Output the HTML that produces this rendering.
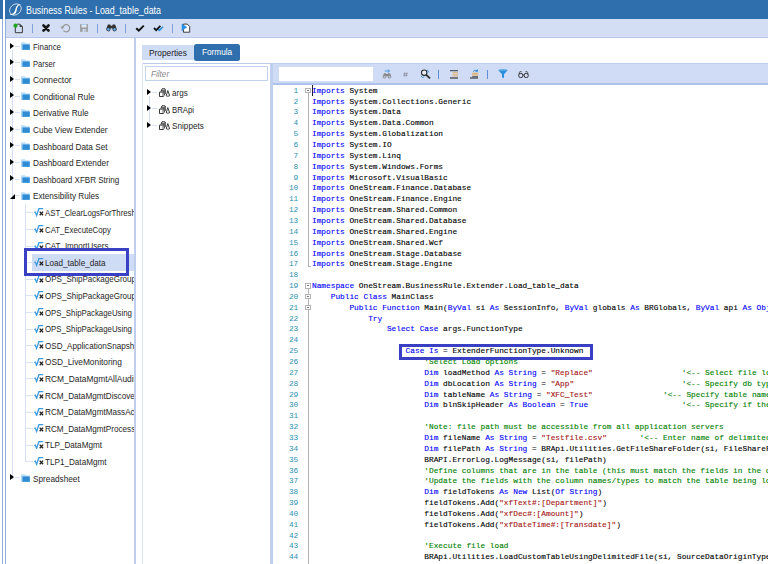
<!DOCTYPE html>
<html><head><meta charset="utf-8"><title>Business Rules - Load_table_data</title>
<style>
html,body{margin:0;padding:0;font-family:"Liberation Sans",sans-serif;}
body{width:768px;height:564px;overflow:hidden;background:#fff;position:relative;font-family:"Liberation Sans",sans-serif;}
#root{position:absolute;left:0;top:0;width:768px;height:564px;overflow:hidden;background:#fff;}
.abs{position:absolute;}
/* window chrome */
#lstrip{left:0;top:0;width:3px;height:19px;background:#2f6fad;}
#lline1{left:2px;top:19px;width:1px;height:545px;background:#8fb0d8;}
#lline2{left:5px;top:19px;width:1px;height:545px;background:#8fb0d8;}
#title{left:5px;top:0;width:763px;height:19px;background:#2f6fad;}
#title .t{position:absolute;left:21.4px;top:4.0px;font-size:10px;line-height:13px;color:#fff;white-space:nowrap;transform:scaleX(0.8862);transform-origin:0 50%;}
#tb{left:6px;top:19px;width:762px;height:19px;background:#d3def5;border-bottom:1.4px solid #b6c7ea;box-sizing:border-box;}
.sep{position:absolute;width:1px;background:#7fa2da;top:23.5px;height:9px;}
/* tree */
#treep{left:6px;top:38px;width:127px;height:526px;background:#fff;overflow:hidden;}
#treeclip{left:0;top:0;width:133.6px;height:564px;overflow:hidden;}
#split1{left:133.8px;top:37.5px;width:2.2px;height:527px;background:#bfcdee;}
.tt{position:absolute;font-size:8.7px;line-height:14px;color:#262626;white-space:nowrap;transform-origin:0 50%;}
.ti{position:absolute;line-height:0;}
.fo{width:9px;height:8.2px;}
.ru{width:10px;height:8.5px;}
.arr-c{position:absolute;left:9.8px;width:0;height:0;border-left:4.5px solid #000;border-top:3.6px solid transparent;border-bottom:3.6px solid transparent;}
.arr-o{position:absolute;left:10.4px;width:0;height:0;border-bottom:5px solid #000;border-left:5px solid transparent;}
.hl{position:absolute;height:1px;background:#dbe2f3;}
.vl{position:absolute;width:1px;background:#d5def2;}
.selbg{position:absolute;left:32px;width:102px;height:16.5px;background:#cfdcf5;}
.annot{position:absolute;border:3px solid #3a40c4;box-sizing:border-box;}
/* tabs */
#tabP{left:142px;top:45px;width:52px;height:15px;background:#cfdcf5;}
#tabF{left:194px;top:44px;width:45.5px;height:16.6px;background:#2f6fad;border-radius:2.5px;}
.tabt{position:absolute;font-size:8.7px;line-height:12px;white-space:nowrap;transform-origin:0 50%;}
#pborder-t{left:142px;top:63px;width:626px;height:1px;background:#bccbeb;}
#pborder-l{left:141.6px;top:63px;width:1.2px;height:501px;background:#dbe4f6;}
#filter{left:145px;top:66px;width:122.6px;height:15.4px;border:1px solid #c3d2ee;box-sizing:border-box;background:#fff;}
#filter span{position:absolute;left:4.6px;top:2px;font-size:8.4px;line-height:10px;font-style:italic;color:#8a8a8a;transform:scaleX(0.9718);transform-origin:0 50%;}
#split2{left:270px;top:63px;width:3px;height:501px;background:#c1cfee;}
.gi{position:absolute;line-height:0;}
/* code */
#ctb{left:273px;top:63px;width:495px;height:21.5px;background:#d0dcf5;border-bottom:2px solid #adc2ea;border-top:1px solid #bfcdee;box-sizing:border-box;}
#search{left:278.5px;top:67px;width:94.6px;height:14px;background:#fff;}
#codewrap{left:273px;top:84.5px;width:495px;height:480px;overflow:hidden;background:#fff;}
#code{position:absolute;left:-273px;top:-84.5px;width:1200px;height:564px;font-family:"Liberation Mono",monospace;font-size:7.800px;}
.ln{position:absolute;left:270px;width:28.3px;text-align:right;height:11px;line-height:11px;color:#2b91af;white-space:pre;}
.cl{position:absolute;height:11px;line-height:11px;color:#000;white-space:pre;-webkit-text-stroke:0.12px;}
.k{color:#0000ff}.s{color:#a31515}.c{color:#008000}
.fb{position:absolute;left:305.2px;border:1px solid #b3b3b3;box-sizing:border-box;background:#fff;width:5.6px;height:5.6px;}
.fb i{position:absolute;left:0.6px;top:1.3px;width:2.6px;height:1px;background:#777;}
.foldv{position:absolute;left:308px;width:1px;background:#b3b3b3;}
</style></head>
<body><div id="root">
<!-- chrome -->
<div class="abs" id="lstrip"></div>
<div class="abs" id="lline1"></div>
<div class="abs" id="lline2"></div>
<div class="abs" id="title">
 <svg class="abs" style="left:4px;top:3px" width="13" height="13" viewBox="0 0 13 13"><ellipse cx="6.4" cy="6.5" rx="6.3" ry="5.1" fill="none" stroke="#d5e1f0" stroke-width="0.9" transform="rotate(-40 6.4 6.5)"/><path d="M12.4 1.0 C8.8 0.8 7.6 2.8 6.7 5.2 C6 7.2 5.6 9.6 4 10.4 C2.8 11 1.6 11.3 0.2 11.7 C3 12.3 5.6 11.9 6.8 10.1 C7.8 8.6 7.6 6.5 8.4 4.6 C9.2 2.7 10.3 1.7 12.4 1.0 Z" fill="#fff"/></svg>
 <div class="t">Business Rules - Load_table_data</div>
</div>
<div class="abs" id="tb"></div>
<!-- toolbar icons -->
<div id="tbicons">
 <div class="sep" style="left:32px"></div>
 <div class="sep" style="left:97.3px"></div>
 <div class="sep" style="left:125px"></div>
 <div class="sep" style="left:171.5px"></div>
 <!-- new doc -->
 <svg class="abs" style="left:13px;top:22.5px" width="11" height="11" viewBox="0 0 11 11"><path d="M2.3 3.6 V9.7 H9.4 V3.7 L6.9 1.2 H4.2" fill="none" stroke="#3a3a3a" stroke-width="1"/><path d="M6.7 0.9 V3.9 H9.7Z" fill="#3a3a3a"/><circle cx="2.5" cy="2.7" r="2.1" fill="#1fa81f"/></svg>
 <!-- delete X -->
 <svg class="abs" style="left:41px;top:23px" width="10" height="10" viewBox="0 0 10 10"><path d="M2.5 2.5 L7.5 7.5 M7.5 2.5 L2.5 7.5" stroke="#151515" stroke-width="2.6" stroke-linecap="round"/></svg>
 <!-- undo -->
 <svg class="abs" style="left:59.6px;top:23px" width="11" height="10" viewBox="0 0 11 10"><path d="M2.5 5.4 A3.6 3.6 0 1 1 3.4 7.6" fill="none" stroke="#9a9a9a" stroke-width="1.3"/><path d="M0.5 3.4 L4.4 3.6 L2.2 6.6Z" fill="#9a9a9a"/></svg>
 <!-- save -->
 <svg class="abs" style="left:80.3px;top:24px" width="8" height="8" viewBox="0 0 8 8"><rect x="0.1" y="0.1" width="7.8" height="7.7" fill="#9c9c9c"/><rect x="1.6" y="0" width="4.9" height="3.5" fill="#dfe8f8"/><rect x="1.6" y="0" width="4.9" height="0.7" fill="#8cc3f2"/><rect x="2.6" y="5" width="3.6" height="2.9" fill="#d3def5"/><rect x="4.6" y="5.5" width="0.8" height="2.4" fill="#9c9c9c"/></svg>
 <!-- binoculars -->
 <svg class="abs" style="left:106px;top:24px" width="11" height="8" viewBox="0 0 11 8"><path d="M1.9 0.6 H4.2 L4.9 1.8 H6.1 L6.8 0.6 H9.1 L10.8 5 A2.2 2.2 0 0 1 6.5 5.8 L6.3 4.2 H4.7 L4.5 5.8 A2.2 2.2 0 0 1 0.2 5 Z" fill="#333"/><circle cx="2.4" cy="5.4" r="1.35" fill="#5aa5e8"/><circle cx="8.6" cy="5.4" r="1.35" fill="#5aa5e8"/></svg>
 <!-- check -->
 <svg class="abs" style="left:134.5px;top:24px" width="10" height="8" viewBox="0 0 10 8"><path d="M1.2 4.2 L3.8 6.6 L8.8 1.6" fill="none" stroke="#151515" stroke-width="2"/></svg>
 <!-- double check -->
 <svg class="abs" style="left:153.3px;top:24px" width="11" height="8" viewBox="0 0 11 8"><path d="M5 5 L6.4 6.4 L10 2.8" fill="none" stroke="#2e8fe0" stroke-width="1.6"/><path d="M0.9 4 L3.2 6.2 L7.4 1.8" fill="none" stroke="#151515" stroke-width="1.8"/></svg>
 <!-- copy doc -->
 <svg class="abs" style="left:181px;top:23px" width="10" height="10" viewBox="0 0 10 10"><path d="M2.4 1.1 H6.3 L8.7 3.5 V9.2 H2.4Z" fill="#fff" stroke="#3a3a3a" stroke-width="1"/><path d="M0.7 0.4 L6.2 4.2 L0.7 8Z" fill="#2e8fe0"/></svg>
</div>
<!-- tree -->
<div class="abs" id="treeclip">
 <div class="vl" style="left:12px;top:50px;height:429px"></div>
 <div class="vl" style="left:25px;top:204px;height:258px"></div>
<div class="arr-c" style="top:42.60px"></div>
<div class="hl" style="top:45.70px;left:14.5px;width:5px"></div>
<div class="ti" style="top:42.40px;left:20.7px"><svg class="fo" viewBox="0 0 9 8.2"><path d="M0.1 0.2 H3.9 L4.7 1.6 H8.6 V8 H0.1 Z" fill="#a5d3f5"/><path d="M0.1 0.2 H3.9 L4.5 1.4 H0.1 Z" fill="#d3e9fb"/><path d="M1.5 2.5 H8.8 V7.8 H1.5 Z" fill="#2e8bd4"/></svg></div>
<div class="tt" style="top:39.90px;left:32.8px;transform:scaleX(0.9055)">Finance</div>
<div class="arr-c" style="top:59.20px"></div>
<div class="hl" style="top:62.30px;left:14.5px;width:5px"></div>
<div class="ti" style="top:59.00px;left:20.7px"><svg class="fo" viewBox="0 0 9 8.2"><path d="M0.1 0.2 H3.9 L4.7 1.6 H8.6 V8 H0.1 Z" fill="#a5d3f5"/><path d="M0.1 0.2 H3.9 L4.5 1.4 H0.1 Z" fill="#d3e9fb"/><path d="M1.5 2.5 H8.8 V7.8 H1.5 Z" fill="#2e8bd4"/></svg></div>
<div class="tt" style="top:56.50px;left:32.8px;transform:scaleX(0.8674)">Parser</div>
<div class="arr-c" style="top:75.80px"></div>
<div class="hl" style="top:78.90px;left:14.5px;width:5px"></div>
<div class="ti" style="top:75.60px;left:20.7px"><svg class="fo" viewBox="0 0 9 8.2"><path d="M0.1 0.2 H3.9 L4.7 1.6 H8.6 V8 H0.1 Z" fill="#a5d3f5"/><path d="M0.1 0.2 H3.9 L4.5 1.4 H0.1 Z" fill="#d3e9fb"/><path d="M1.5 2.5 H8.8 V7.8 H1.5 Z" fill="#2e8bd4"/></svg></div>
<div class="tt" style="top:73.10px;left:32.8px;transform:scaleX(0.9640)">Connector</div>
<div class="arr-c" style="top:92.40px"></div>
<div class="hl" style="top:95.50px;left:14.5px;width:5px"></div>
<div class="ti" style="top:92.20px;left:20.7px"><svg class="fo" viewBox="0 0 9 8.2"><path d="M0.1 0.2 H3.9 L4.7 1.6 H8.6 V8 H0.1 Z" fill="#a5d3f5"/><path d="M0.1 0.2 H3.9 L4.5 1.4 H0.1 Z" fill="#d3e9fb"/><path d="M1.5 2.5 H8.8 V7.8 H1.5 Z" fill="#2e8bd4"/></svg></div>
<div class="tt" style="top:89.70px;left:32.8px;transform:scaleX(0.9678)">Conditional Rule</div>
<div class="arr-c" style="top:109.00px"></div>
<div class="hl" style="top:112.10px;left:14.5px;width:5px"></div>
<div class="ti" style="top:108.80px;left:20.7px"><svg class="fo" viewBox="0 0 9 8.2"><path d="M0.1 0.2 H3.9 L4.7 1.6 H8.6 V8 H0.1 Z" fill="#a5d3f5"/><path d="M0.1 0.2 H3.9 L4.5 1.4 H0.1 Z" fill="#d3e9fb"/><path d="M1.5 2.5 H8.8 V7.8 H1.5 Z" fill="#2e8bd4"/></svg></div>
<div class="tt" style="top:106.30px;left:32.8px;transform:scaleX(0.9422)">Derivative Rule</div>
<div class="arr-c" style="top:125.60px"></div>
<div class="hl" style="top:128.70px;left:14.5px;width:5px"></div>
<div class="ti" style="top:125.40px;left:20.7px"><svg class="fo" viewBox="0 0 9 8.2"><path d="M0.1 0.2 H3.9 L4.7 1.6 H8.6 V8 H0.1 Z" fill="#a5d3f5"/><path d="M0.1 0.2 H3.9 L4.5 1.4 H0.1 Z" fill="#d3e9fb"/><path d="M1.5 2.5 H8.8 V7.8 H1.5 Z" fill="#2e8bd4"/></svg></div>
<div class="tt" style="top:122.90px;left:32.8px;transform:scaleX(0.9425)">Cube View Extender</div>
<div class="arr-c" style="top:142.20px"></div>
<div class="hl" style="top:145.30px;left:14.5px;width:5px"></div>
<div class="ti" style="top:142.00px;left:20.7px"><svg class="fo" viewBox="0 0 9 8.2"><path d="M0.1 0.2 H3.9 L4.7 1.6 H8.6 V8 H0.1 Z" fill="#a5d3f5"/><path d="M0.1 0.2 H3.9 L4.5 1.4 H0.1 Z" fill="#d3e9fb"/><path d="M1.5 2.5 H8.8 V7.8 H1.5 Z" fill="#2e8bd4"/></svg></div>
<div class="tt" style="top:139.50px;left:32.8px;transform:scaleX(0.9464)">Dashboard Data Set</div>
<div class="arr-c" style="top:158.80px"></div>
<div class="hl" style="top:161.90px;left:14.5px;width:5px"></div>
<div class="ti" style="top:158.60px;left:20.7px"><svg class="fo" viewBox="0 0 9 8.2"><path d="M0.1 0.2 H3.9 L4.7 1.6 H8.6 V8 H0.1 Z" fill="#a5d3f5"/><path d="M0.1 0.2 H3.9 L4.5 1.4 H0.1 Z" fill="#d3e9fb"/><path d="M1.5 2.5 H8.8 V7.8 H1.5 Z" fill="#2e8bd4"/></svg></div>
<div class="tt" style="top:156.10px;left:32.8px;transform:scaleX(0.9525)">Dashboard Extender</div>
<div class="arr-c" style="top:175.40px"></div>
<div class="hl" style="top:178.50px;left:14.5px;width:5px"></div>
<div class="ti" style="top:175.20px;left:20.7px"><svg class="fo" viewBox="0 0 9 8.2"><path d="M0.1 0.2 H3.9 L4.7 1.6 H8.6 V8 H0.1 Z" fill="#a5d3f5"/><path d="M0.1 0.2 H3.9 L4.5 1.4 H0.1 Z" fill="#d3e9fb"/><path d="M1.5 2.5 H8.8 V7.8 H1.5 Z" fill="#2e8bd4"/></svg></div>
<div class="tt" style="top:172.70px;left:32.8px;transform:scaleX(0.9249)">Dashboard XFBR String</div>
<div class="arr-o" style="top:193.80px"></div>
<div class="hl" style="top:195.10px;left:14.5px;width:5px"></div>
<div class="ti" style="top:191.80px;left:20.7px"><svg class="fo" viewBox="0 0 9 8.2"><path d="M0.1 0.2 H3.9 L4.7 1.6 H8.6 V8 H0.1 Z" fill="#a5d3f5"/><path d="M0.1 0.2 H3.9 L4.5 1.4 H0.1 Z" fill="#d3e9fb"/><path d="M1.5 2.5 H8.8 V7.8 H1.5 Z" fill="#2e8bd4"/></svg></div>
<div class="tt" style="top:189.30px;left:32.8px;transform:scaleX(0.9376)">Extensibility Rules</div>
<div class="hl" style="top:212.40px;left:26px;width:7px"></div>
<div class="ti" style="top:208.30px;left:33.6px"><svg class="ru" viewBox="0 0 10 8.5"><path d="M0.3 4.5 L1.3 4.1 L2.6 7.4 L4.9 0.7 H9.2" fill="none" stroke="#3a9be0" stroke-width="1.3"/><path d="M5.7 3.6 L9.1 7.2 M9.1 3.6 L5.7 7.2" stroke="#222" stroke-width="1.35"/></svg></div>
<div class="tt" style="top:205.90px;left:45.2px;transform:scaleX(0.8956)">AST_ClearLogsForThreshold</div>
<div class="hl" style="top:229.00px;left:26px;width:7px"></div>
<div class="ti" style="top:224.90px;left:33.6px"><svg class="ru" viewBox="0 0 10 8.5"><path d="M0.3 4.5 L1.3 4.1 L2.6 7.4 L4.9 0.7 H9.2" fill="none" stroke="#3a9be0" stroke-width="1.3"/><path d="M5.7 3.6 L9.1 7.2 M9.1 3.6 L5.7 7.2" stroke="#222" stroke-width="1.35"/></svg></div>
<div class="tt" style="top:222.50px;left:45.2px;transform:scaleX(0.8985)">CAT_ExecuteCopy</div>
<div class="hl" style="top:245.60px;left:26px;width:7px"></div>
<div class="ti" style="top:241.50px;left:33.6px"><svg class="ru" viewBox="0 0 10 8.5"><path d="M0.3 4.5 L1.3 4.1 L2.6 7.4 L4.9 0.7 H9.2" fill="none" stroke="#3a9be0" stroke-width="1.3"/><path d="M5.7 3.6 L9.1 7.2 M9.1 3.6 L5.7 7.2" stroke="#222" stroke-width="1.35"/></svg></div>
<div class="tt" style="top:239.10px;left:45.2px;transform:scaleX(0.9220)">CAT_ImportUsers</div>
<div class="selbg" style="top:254.20px"></div>
<div class="hl" style="top:262.20px;left:26px;width:7px"></div>
<div class="ti" style="top:258.10px;left:33.6px"><svg class="ru" viewBox="0 0 10 8.5"><path d="M0.3 4.5 L1.3 4.1 L2.6 7.4 L4.9 0.7 H9.2" fill="none" stroke="#3a9be0" stroke-width="1.3"/><path d="M5.7 3.6 L9.1 7.2 M9.1 3.6 L5.7 7.2" stroke="#222" stroke-width="1.35"/></svg></div>
<div class="tt" style="top:255.70px;left:45.2px;transform:scaleX(0.9344)">Load_table_data</div>
<div class="hl" style="top:278.80px;left:26px;width:7px"></div>
<div class="ti" style="top:274.70px;left:33.6px"><svg class="ru" viewBox="0 0 10 8.5"><path d="M0.3 4.5 L1.3 4.1 L2.6 7.4 L4.9 0.7 H9.2" fill="none" stroke="#3a9be0" stroke-width="1.3"/><path d="M5.7 3.6 L9.1 7.2 M9.1 3.6 L5.7 7.2" stroke="#222" stroke-width="1.35"/></svg></div>
<div class="tt" style="top:272.30px;left:45.2px;transform:scaleX(0.9231)">OPS_ShipPackageGroupA</div>
<div class="hl" style="top:295.40px;left:26px;width:7px"></div>
<div class="ti" style="top:291.30px;left:33.6px"><svg class="ru" viewBox="0 0 10 8.5"><path d="M0.3 4.5 L1.3 4.1 L2.6 7.4 L4.9 0.7 H9.2" fill="none" stroke="#3a9be0" stroke-width="1.3"/><path d="M5.7 3.6 L9.1 7.2 M9.1 3.6 L5.7 7.2" stroke="#222" stroke-width="1.35"/></svg></div>
<div class="tt" style="top:288.90px;left:45.2px;transform:scaleX(0.9231)">OPS_ShipPackageGroupB</div>
<div class="hl" style="top:312.00px;left:26px;width:7px"></div>
<div class="ti" style="top:307.90px;left:33.6px"><svg class="ru" viewBox="0 0 10 8.5"><path d="M0.3 4.5 L1.3 4.1 L2.6 7.4 L4.9 0.7 H9.2" fill="none" stroke="#3a9be0" stroke-width="1.3"/><path d="M5.7 3.6 L9.1 7.2 M9.1 3.6 L5.7 7.2" stroke="#222" stroke-width="1.35"/></svg></div>
<div class="tt" style="top:305.50px;left:45.2px;transform:scaleX(0.8996)">OPS_ShipPackageUsing</div>
<div class="hl" style="top:328.60px;left:26px;width:7px"></div>
<div class="ti" style="top:324.50px;left:33.6px"><svg class="ru" viewBox="0 0 10 8.5"><path d="M0.3 4.5 L1.3 4.1 L2.6 7.4 L4.9 0.7 H9.2" fill="none" stroke="#3a9be0" stroke-width="1.3"/><path d="M5.7 3.6 L9.1 7.2 M9.1 3.6 L5.7 7.2" stroke="#222" stroke-width="1.35"/></svg></div>
<div class="tt" style="top:322.10px;left:45.2px;transform:scaleX(0.8996)">OPS_ShipPackageUsing</div>
<div class="hl" style="top:345.20px;left:26px;width:7px"></div>
<div class="ti" style="top:341.10px;left:33.6px"><svg class="ru" viewBox="0 0 10 8.5"><path d="M0.3 4.5 L1.3 4.1 L2.6 7.4 L4.9 0.7 H9.2" fill="none" stroke="#3a9be0" stroke-width="1.3"/><path d="M5.7 3.6 L9.1 7.2 M9.1 3.6 L5.7 7.2" stroke="#222" stroke-width="1.35"/></svg></div>
<div class="tt" style="top:338.70px;left:45.2px;transform:scaleX(0.9334)">OSD_ApplicationSnapshot</div>
<div class="hl" style="top:361.80px;left:26px;width:7px"></div>
<div class="ti" style="top:357.70px;left:33.6px"><svg class="ru" viewBox="0 0 10 8.5"><path d="M0.3 4.5 L1.3 4.1 L2.6 7.4 L4.9 0.7 H9.2" fill="none" stroke="#3a9be0" stroke-width="1.3"/><path d="M5.7 3.6 L9.1 7.2 M9.1 3.6 L5.7 7.2" stroke="#222" stroke-width="1.35"/></svg></div>
<div class="tt" style="top:355.30px;left:45.2px;transform:scaleX(0.9581)">OSD_LiveMonitoring</div>
<div class="hl" style="top:378.40px;left:26px;width:7px"></div>
<div class="ti" style="top:374.30px;left:33.6px"><svg class="ru" viewBox="0 0 10 8.5"><path d="M0.3 4.5 L1.3 4.1 L2.6 7.4 L4.9 0.7 H9.2" fill="none" stroke="#3a9be0" stroke-width="1.3"/><path d="M5.7 3.6 L9.1 7.2 M9.1 3.6 L5.7 7.2" stroke="#222" stroke-width="1.35"/></svg></div>
<div class="tt" style="top:371.90px;left:45.2px;transform:scaleX(0.9658)">RCM_DataMgmtAllAudit</div>
<div class="hl" style="top:395.00px;left:26px;width:7px"></div>
<div class="ti" style="top:390.90px;left:33.6px"><svg class="ru" viewBox="0 0 10 8.5"><path d="M0.3 4.5 L1.3 4.1 L2.6 7.4 L4.9 0.7 H9.2" fill="none" stroke="#3a9be0" stroke-width="1.3"/><path d="M5.7 3.6 L9.1 7.2 M9.1 3.6 L5.7 7.2" stroke="#222" stroke-width="1.35"/></svg></div>
<div class="tt" style="top:388.50px;left:45.2px;transform:scaleX(0.9398)">RCM_DataMgmtDiscover</div>
<div class="hl" style="top:411.60px;left:26px;width:7px"></div>
<div class="ti" style="top:407.50px;left:33.6px"><svg class="ru" viewBox="0 0 10 8.5"><path d="M0.3 4.5 L1.3 4.1 L2.6 7.4 L4.9 0.7 H9.2" fill="none" stroke="#3a9be0" stroke-width="1.3"/><path d="M5.7 3.6 L9.1 7.2 M9.1 3.6 L5.7 7.2" stroke="#222" stroke-width="1.35"/></svg></div>
<div class="tt" style="top:405.10px;left:45.2px;transform:scaleX(0.9381)">RCM_DataMgmtMassAction</div>
<div class="hl" style="top:428.20px;left:26px;width:7px"></div>
<div class="ti" style="top:424.10px;left:33.6px"><svg class="ru" viewBox="0 0 10 8.5"><path d="M0.3 4.5 L1.3 4.1 L2.6 7.4 L4.9 0.7 H9.2" fill="none" stroke="#3a9be0" stroke-width="1.3"/><path d="M5.7 3.6 L9.1 7.2 M9.1 3.6 L5.7 7.2" stroke="#222" stroke-width="1.35"/></svg></div>
<div class="tt" style="top:421.70px;left:45.2px;transform:scaleX(0.9397)">RCM_DataMgmtProcess</div>
<div class="hl" style="top:444.80px;left:26px;width:7px"></div>
<div class="ti" style="top:440.70px;left:33.6px"><svg class="ru" viewBox="0 0 10 8.5"><path d="M0.3 4.5 L1.3 4.1 L2.6 7.4 L4.9 0.7 H9.2" fill="none" stroke="#3a9be0" stroke-width="1.3"/><path d="M5.7 3.6 L9.1 7.2 M9.1 3.6 L5.7 7.2" stroke="#222" stroke-width="1.35"/></svg></div>
<div class="tt" style="top:438.30px;left:45.2px;transform:scaleX(0.9368)">TLP_DataMgmt</div>
<div class="hl" style="top:461.40px;left:26px;width:7px"></div>
<div class="ti" style="top:457.30px;left:33.6px"><svg class="ru" viewBox="0 0 10 8.5"><path d="M0.3 4.5 L1.3 4.1 L2.6 7.4 L4.9 0.7 H9.2" fill="none" stroke="#3a9be0" stroke-width="1.3"/><path d="M5.7 3.6 L9.1 7.2 M9.1 3.6 L5.7 7.2" stroke="#222" stroke-width="1.35"/></svg></div>
<div class="tt" style="top:454.90px;left:45.2px;transform:scaleX(0.9365)">TLP1_DataMgmt</div>
<div class="arr-c" style="top:474.20px"></div>
<div class="hl" style="top:477.30px;left:14.5px;width:5px"></div>
<div class="ti" style="top:474.00px;left:20.7px"><svg class="fo" viewBox="0 0 9 8.2"><path d="M0.1 0.2 H3.9 L4.7 1.6 H8.6 V8 H0.1 Z" fill="#a5d3f5"/><path d="M0.1 0.2 H3.9 L4.5 1.4 H0.1 Z" fill="#d3e9fb"/><path d="M1.5 2.5 H8.8 V7.8 H1.5 Z" fill="#2e8bd4"/></svg></div>
<div class="tt" style="top:471.50px;left:32.8px;transform:scaleX(0.9476)">Spreadsheet</div>
</div>
<div class="abs" id="split1"></div>
<div class="annot" style="left:23.6px;top:248.4px;width:105.3px;height:27.2px;border-width:3.2px"></div>
<!-- tabs -->
<div class="abs" id="tabP"><span class="tabt" style="left:7.1px;top:2px;color:#1a1a1a;transform:scaleX(0.9568)">Properties</span></div>
<div class="abs" id="tabF"><span class="tabt" style="left:8.2px;top:2.3px;color:#fff;transform:scaleX(0.9475)">Formula</span></div>
<div class="abs" id="pborder-t"></div>
<div class="abs" id="pborder-l"></div>
<div class="abs" id="filter"><span>Filter</span></div>
<div class="vl" style="left:148.7px;top:95.6px;height:30px"></div>
<div class="arr-c" style="top:88.60px;left:146.9px"></div>
<div class="hl" style="top:91.70px;left:151.5px;width:5px"></div>
<div class="gi" style="top:87.90px;left:158.7px"><svg viewBox="0 0 11 9" width="11" height="9"><path d="M2.7 1.5 V3.4 M6.3 1.5 V5.8 Q5.6 6.3 5.2 6.3" fill="none" stroke="#222" stroke-width="0.9"/><ellipse cx="4.5" cy="1.4" rx="1.85" ry="0.85" fill="#fff" stroke="#222" stroke-width="0.9"/><path d="M0.5 4.3 H4.1 V8.5 H0.5Z" fill="#fff" stroke="#222" stroke-width="0.9"/><path d="M0.5 4.3 L1.7 3.2 H5.3 L4.1 4.3 M5.3 3.2 V7.4 L4.1 8.5" fill="#fff" stroke="#222" stroke-width="0.8"/><path d="M7.2 7.7 L8.8 2.6 L10.6 7.7 Q8.9 8.9 7.2 7.7Z" fill="#fff" stroke="#222" stroke-width="0.9"/></svg></div>
<div class="tt" style="top:85.90px;left:172px;transform:scaleX(0.9287)">args</div>
<div class="arr-c" style="top:105.20px;left:146.9px"></div>
<div class="hl" style="top:108.30px;left:151.5px;width:5px"></div>
<div class="gi" style="top:104.50px;left:158.7px"><svg viewBox="0 0 11 9" width="11" height="9"><path d="M2.7 1.5 V3.4 M6.3 1.5 V5.8 Q5.6 6.3 5.2 6.3" fill="none" stroke="#222" stroke-width="0.9"/><ellipse cx="4.5" cy="1.4" rx="1.85" ry="0.85" fill="#fff" stroke="#222" stroke-width="0.9"/><path d="M0.5 4.3 H4.1 V8.5 H0.5Z" fill="#fff" stroke="#222" stroke-width="0.9"/><path d="M0.5 4.3 L1.7 3.2 H5.3 L4.1 4.3 M5.3 3.2 V7.4 L4.1 8.5" fill="#fff" stroke="#222" stroke-width="0.8"/><path d="M7.2 7.7 L8.8 2.6 L10.6 7.7 Q8.9 8.9 7.2 7.7Z" fill="#fff" stroke="#222" stroke-width="0.9"/></svg></div>
<div class="tt" style="top:102.50px;left:172px;transform:scaleX(0.8934)">BRApi</div>
<div class="arr-c" style="top:121.80px;left:146.9px"></div>
<div class="hl" style="top:124.90px;left:151.5px;width:5px"></div>
<div class="gi" style="top:121.10px;left:158.7px"><svg viewBox="0 0 11 9" width="11" height="9"><path d="M2.7 1.5 V3.4 M6.3 1.5 V5.8 Q5.6 6.3 5.2 6.3" fill="none" stroke="#222" stroke-width="0.9"/><ellipse cx="4.5" cy="1.4" rx="1.85" ry="0.85" fill="#fff" stroke="#222" stroke-width="0.9"/><path d="M0.5 4.3 H4.1 V8.5 H0.5Z" fill="#fff" stroke="#222" stroke-width="0.9"/><path d="M0.5 4.3 L1.7 3.2 H5.3 L4.1 4.3 M5.3 3.2 V7.4 L4.1 8.5" fill="#fff" stroke="#222" stroke-width="0.8"/><path d="M7.2 7.7 L8.8 2.6 L10.6 7.7 Q8.9 8.9 7.2 7.7Z" fill="#fff" stroke="#222" stroke-width="0.9"/></svg></div>
<div class="tt" style="top:119.10px;left:172px;transform:scaleX(0.9434)">Snippets</div>
<div class="abs" id="split2"></div>
<!-- code -->
<div class="abs" id="ctb"></div>
<div class="abs" id="search"></div>
<div id="cicons">
 <div class="sep" style="left:438px;top:69.5px;height:9px;background:#5f8fda"></div>
 <div class="sep" style="left:487px;top:69.5px;height:9px;background:#5f8fda"></div>
 <!-- find next -->
 <svg class="abs" style="left:381.5px;top:69px" width="10" height="10" viewBox="0 0 10 10"><path d="M2.6 2 H7.4 M5.8 0.5 L7.6 2 L5.8 3.5" fill="none" stroke="#4d9be6" stroke-width="1"/><path d="M2 4.2 H4 L4.5 5 H5.5 L6 4.2 H8 L9.4 7.6 A1.9 1.9 0 0 1 5.7 8.2 L5.5 7 H4.5 L4.3 8.2 A1.9 1.9 0 0 1 0.6 7.6 Z" fill="#8a8a8a"/><circle cx="2.5" cy="7.8" r="1.1" fill="#b9c3d6"/><circle cx="7.5" cy="7.8" r="1.1" fill="#b9c3d6"/></svg>
 <!-- hash -->
 <svg class="abs" style="left:403.3px;top:71.8px" width="5" height="5" viewBox="0 0 5 5"><path d="M1.9 0.3 L1.1 4.7 M3.9 0.3 L3.1 4.7 M0.4 1.7 H4.8 M0.2 3.3 H4.6" stroke="#8d8d9a" stroke-width="0.7" fill="none"/></svg>
 <!-- magnifier -->
 <svg class="abs" style="left:419.5px;top:68.5px" width="11" height="10" viewBox="0 0 11 10"><circle cx="4.2" cy="3.7" r="2.7" fill="#e9f0fb" stroke="#2a2a2a" stroke-width="1.1"/><path d="M6.2 5.8 L10 9.4" stroke="#2a2a2a" stroke-width="1.7"/><path d="M7.2 1 L8.8 2.4 L7.2 3.8 M1 7 L2.6 8.6 L4.4 7.4" fill="none" stroke="#3f93e8" stroke-width="1"/></svg>
 <!-- indent -->
 <svg class="abs" style="left:450px;top:69.5px" width="8.2" height="9" viewBox="0 0 8.2 9"><path d="M0 0.7 H8.2" stroke="#2a2a2a" stroke-width="0.9"/><path d="M2.5 2.6 H8.2 M2.5 4.3 H8.2 M2.5 6 H8.2" stroke="#e8a33a" stroke-width="0.7"/><path d="M0 8 H8.2" stroke="#2a2a2a" stroke-width="1.1"/></svg>
 <!-- outdent -->
 <svg class="abs" style="left:470px;top:68.5px" width="8.2" height="10" viewBox="0 0 8.2 10"><path d="M3 2.6 Q4.6 0.4 7.2 1.6 M7.6 0.3 V2.6 H5.4" fill="none" stroke="#3f93e8" stroke-width="1"/><path d="M2.2 4.3 H8.2 M2.2 6 H8.2" stroke="#e8a33a" stroke-width="0.9"/><path d="M0 9 H8.2" stroke="#2a2a2a" stroke-width="1.1"/><path d="M2.2 7.6 H8.2" stroke="#2a2a2a" stroke-width="0.7"/></svg>
 <!-- funnel -->
 <svg class="abs" style="left:498px;top:69px" width="10" height="10" viewBox="0 0 10 10"><path d="M0.1 0.9 Q5 -0.6 9.9 0.9 L6 5.2 V9.2 L4 8.2 V5.2 Z" fill="#2b8fdc"/><ellipse cx="5" cy="1" rx="4.2" ry="0.6" fill="#79bdf0"/></svg>
 <!-- glasses -->
 <svg class="abs" style="left:518px;top:70.5px" width="11" height="7.5" viewBox="0 0 11 7.5"><path d="M1.6 0.8 Q2.6 0.2 3.6 0.8 M7.4 0.8 Q8.4 0.2 9.4 0.8" fill="none" stroke="#333" stroke-width="0.9"/><ellipse cx="2.8" cy="4.5" rx="2.1" ry="2.2" fill="none" stroke="#333" stroke-width="1"/><ellipse cx="8.2" cy="4.5" rx="2.1" ry="2.2" fill="none" stroke="#333" stroke-width="1"/><path d="M4.9 4 H6.1" stroke="#333" stroke-width="0.9"/><path d="M1.4 1.2 L1 3.2 M9.6 1.2 L10 3.2" stroke="#333" stroke-width="0.8"/></svg>
</div>
<div class="abs" id="codewrap"><div id="code">
<div class="foldv" style="top:93px;height:174px"></div>
<div class="abs" style="left:308px;top:266.3px;width:3px;height:1px;background:#b3b3b3"></div>
<div class="foldv" style="top:288px;height:276px"></div>
<div class="fb" style="top:87.65px"><i></i></div>
<div class="fb" style="top:282.95px"><i></i></div>
<div class="fb" style="top:293.80px"><i></i></div>
<div class="fb" style="top:304.65px"><i></i></div>
<div class="abs" style="left:311.6px;top:85px;width:1px;height:10.5px;background:#222"></div>
<div class="ln" style="top:85.75px">1</div>
<div class="cl" style="top:85.75px;left:312.00px"><span class="k">Imports</span> System</div>
<div class="ln" style="top:96.60px">2</div>
<div class="cl" style="top:96.60px;left:312.00px"><span class="k">Imports</span> System.Collections.Generic</div>
<div class="ln" style="top:107.45px">3</div>
<div class="cl" style="top:107.45px;left:312.00px"><span class="k">Imports</span> System.Data</div>
<div class="ln" style="top:118.30px">4</div>
<div class="cl" style="top:118.30px;left:312.00px"><span class="k">Imports</span> System.Data.Common</div>
<div class="ln" style="top:129.15px">5</div>
<div class="cl" style="top:129.15px;left:312.00px"><span class="k">Imports</span> System.Globalization</div>
<div class="ln" style="top:140.00px">6</div>
<div class="cl" style="top:140.00px;left:312.00px"><span class="k">Imports</span> System.IO</div>
<div class="ln" style="top:150.85px">7</div>
<div class="cl" style="top:150.85px;left:312.00px"><span class="k">Imports</span> System.Linq</div>
<div class="ln" style="top:161.70px">8</div>
<div class="cl" style="top:161.70px;left:312.00px"><span class="k">Imports</span> System.Windows.Forms</div>
<div class="ln" style="top:172.55px">9</div>
<div class="cl" style="top:172.55px;left:312.00px"><span class="k">Imports</span> Microsoft.VisualBasic</div>
<div class="ln" style="top:183.40px">10</div>
<div class="cl" style="top:183.40px;left:312.00px"><span class="k">Imports</span> OneStream.Finance.Database</div>
<div class="ln" style="top:194.25px">11</div>
<div class="cl" style="top:194.25px;left:312.00px"><span class="k">Imports</span> OneStream.Finance.Engine</div>
<div class="ln" style="top:205.10px">12</div>
<div class="cl" style="top:205.10px;left:312.00px"><span class="k">Imports</span> OneStream.Shared.Common</div>
<div class="ln" style="top:215.95px">13</div>
<div class="cl" style="top:215.95px;left:312.00px"><span class="k">Imports</span> OneStream.Shared.Database</div>
<div class="ln" style="top:226.80px">14</div>
<div class="cl" style="top:226.80px;left:312.00px"><span class="k">Imports</span> OneStream.Shared.Engine</div>
<div class="ln" style="top:237.65px">15</div>
<div class="cl" style="top:237.65px;left:312.00px"><span class="k">Imports</span> OneStream.Shared.Wcf</div>
<div class="ln" style="top:248.50px">16</div>
<div class="cl" style="top:248.50px;left:312.00px"><span class="k">Imports</span> OneStream.Stage.Database</div>
<div class="ln" style="top:259.35px">17</div>
<div class="cl" style="top:259.35px;left:312.00px"><span class="k">Imports</span> OneStream.Stage.Engine</div>
<div class="ln" style="top:270.20px">18</div>
<div class="ln" style="top:281.05px">19</div>
<div class="cl" style="top:281.05px;left:312.00px"><span class="k">Namespace</span> OneStream.BusinessRule.Extender.Load_table_data</div>
<div class="ln" style="top:291.90px">20</div>
<div class="cl" style="top:291.90px;left:330.72px"><span class="k">Public Class</span> MainClass</div>
<div class="ln" style="top:302.75px">21</div>
<div class="cl" style="top:302.75px;left:349.44px"><span class="k">Public Function</span> Main(<span class="k">ByVal</span> si <span class="k">As</span> SessionInfo, <span class="k">ByVal</span> globals <span class="k">As</span> BRGlobals, <span class="k">ByVal</span> api <span class="k">As</span> <span class="k">Object</span>, <span class="k">ByVal</span> args <span class="k">As</span> ExtenderArgs) <span class="k">As Object</span></div>
<div class="ln" style="top:313.60px">22</div>
<div class="cl" style="top:313.60px;left:368.16px"><span class="k">Try</span></div>
<div class="ln" style="top:324.45px">23</div>
<div class="cl" style="top:324.45px;left:386.88px"><span class="k">Select Case</span> args.FunctionType</div>
<div class="ln" style="top:335.30px">24</div>
<div class="ln" style="top:346.15px">25</div>
<div class="cl" style="top:346.15px;left:405.60px"><span class="k">Case Is</span> = ExtenderFunctionType.Unknown</div>
<div class="ln" style="top:357.00px">26</div>
<div class="cl" style="top:357.00px;left:424.32px"><span class="c">'Select Load options</span></div>
<div class="ln" style="top:367.85px">27</div>
<div class="cl" style="top:367.85px;left:424.32px"><span class="k">Dim</span> loadMethod <span class="k">As String</span> = <span class="s">"Replace"</span></div>
<div class="cl" style="top:367.85px;left:681.72px"><span class="c">'&lt;-- Select file load method</span></div>
<div class="ln" style="top:378.70px">28</div>
<div class="cl" style="top:378.70px;left:424.32px"><span class="k">Dim</span> dbLocation <span class="k">As String</span> = <span class="s">"App"</span></div>
<div class="cl" style="top:378.70px;left:681.72px"><span class="c">'&lt;-- Specify db type (App or System)</span></div>
<div class="ln" style="top:389.55px">29</div>
<div class="cl" style="top:389.55px;left:424.32px"><span class="k">Dim</span> tableName <span class="k">As String</span> = <span class="s">"XFC_Test"</span></div>
<div class="cl" style="top:389.55px;left:663.00px"><span class="c">'&lt;-- Specify table name to load</span></div>
<div class="ln" style="top:400.40px">30</div>
<div class="cl" style="top:400.40px;left:424.32px"><span class="k">Dim</span> blnSkipHeader <span class="k">As Boolean</span> = <span class="k">True</span></div>
<div class="cl" style="top:400.40px;left:681.72px"><span class="c">'&lt;-- Specify if the file has a header</span></div>
<div class="ln" style="top:411.25px">31</div>
<div class="ln" style="top:422.10px">32</div>
<div class="cl" style="top:422.10px;left:424.32px"><span class="c">'Note: file path must be accessible from all application servers</span></div>
<div class="ln" style="top:432.95px">33</div>
<div class="cl" style="top:432.95px;left:424.32px"><span class="k">Dim</span> fileName <span class="k">As String</span> = <span class="s">"Testfile.csv"</span></div>
<div class="cl" style="top:432.95px;left:639.60px"><span class="c">'&lt;-- Enter name of delimited file to load</span></div>
<div class="ln" style="top:443.80px">34</div>
<div class="cl" style="top:443.80px;left:424.32px"><span class="k">Dim</span> filePath <span class="k">As String</span> = BRApi.Utilities.GetFileShareFolder(si, FileShareFolderTypes.ApplicationRoot, Nothing)</div>
<div class="ln" style="top:454.65px">35</div>
<div class="cl" style="top:454.65px;left:424.32px">BRAPI.ErrorLog.LogMessage(si, filePath)</div>
<div class="ln" style="top:465.50px">36</div>
<div class="cl" style="top:465.50px;left:424.32px"><span class="c">'Define columns that are in the table (this must match the fields in the custom table)</span></div>
<div class="ln" style="top:476.35px">37</div>
<div class="cl" style="top:476.35px;left:424.32px"><span class="c">'Update the fields with the column names/types to match the table being loaded</span></div>
<div class="ln" style="top:487.20px">38</div>
<div class="cl" style="top:487.20px;left:424.32px"><span class="k">Dim</span> fieldTokens <span class="k">As New</span> List(<span class="k">Of String</span>)</div>
<div class="ln" style="top:498.05px">39</div>
<div class="cl" style="top:498.05px;left:424.32px">fieldTokens.Add(<span class="s">"xfText#:[Department]"</span>)</div>
<div class="ln" style="top:508.90px">40</div>
<div class="cl" style="top:508.90px;left:424.32px">fieldTokens.Add(<span class="s">"xfDec#:[Amount]"</span>)</div>
<div class="ln" style="top:519.75px">41</div>
<div class="cl" style="top:519.75px;left:424.32px">fieldTokens.Add(<span class="s">"xfDateTime#:[Transdate]"</span>)</div>
<div class="ln" style="top:530.60px">42</div>
<div class="ln" style="top:541.45px">43</div>
<div class="cl" style="top:541.45px;left:424.32px"><span class="c">'Execute file load</span></div>
<div class="ln" style="top:552.30px">44</div>
<div class="cl" style="top:552.30px;left:424.32px">BRApi.Utilities.LoadCustomTableUsingDelimitedFile(si, SourceDataOriginTypes.FromFileShare, filePath,</div>
</div></div>
<div class="annot" style="left:399.4px;top:344px;width:193.4px;height:15.6px;border-width:3.1px"></div>
</div></body></html>
